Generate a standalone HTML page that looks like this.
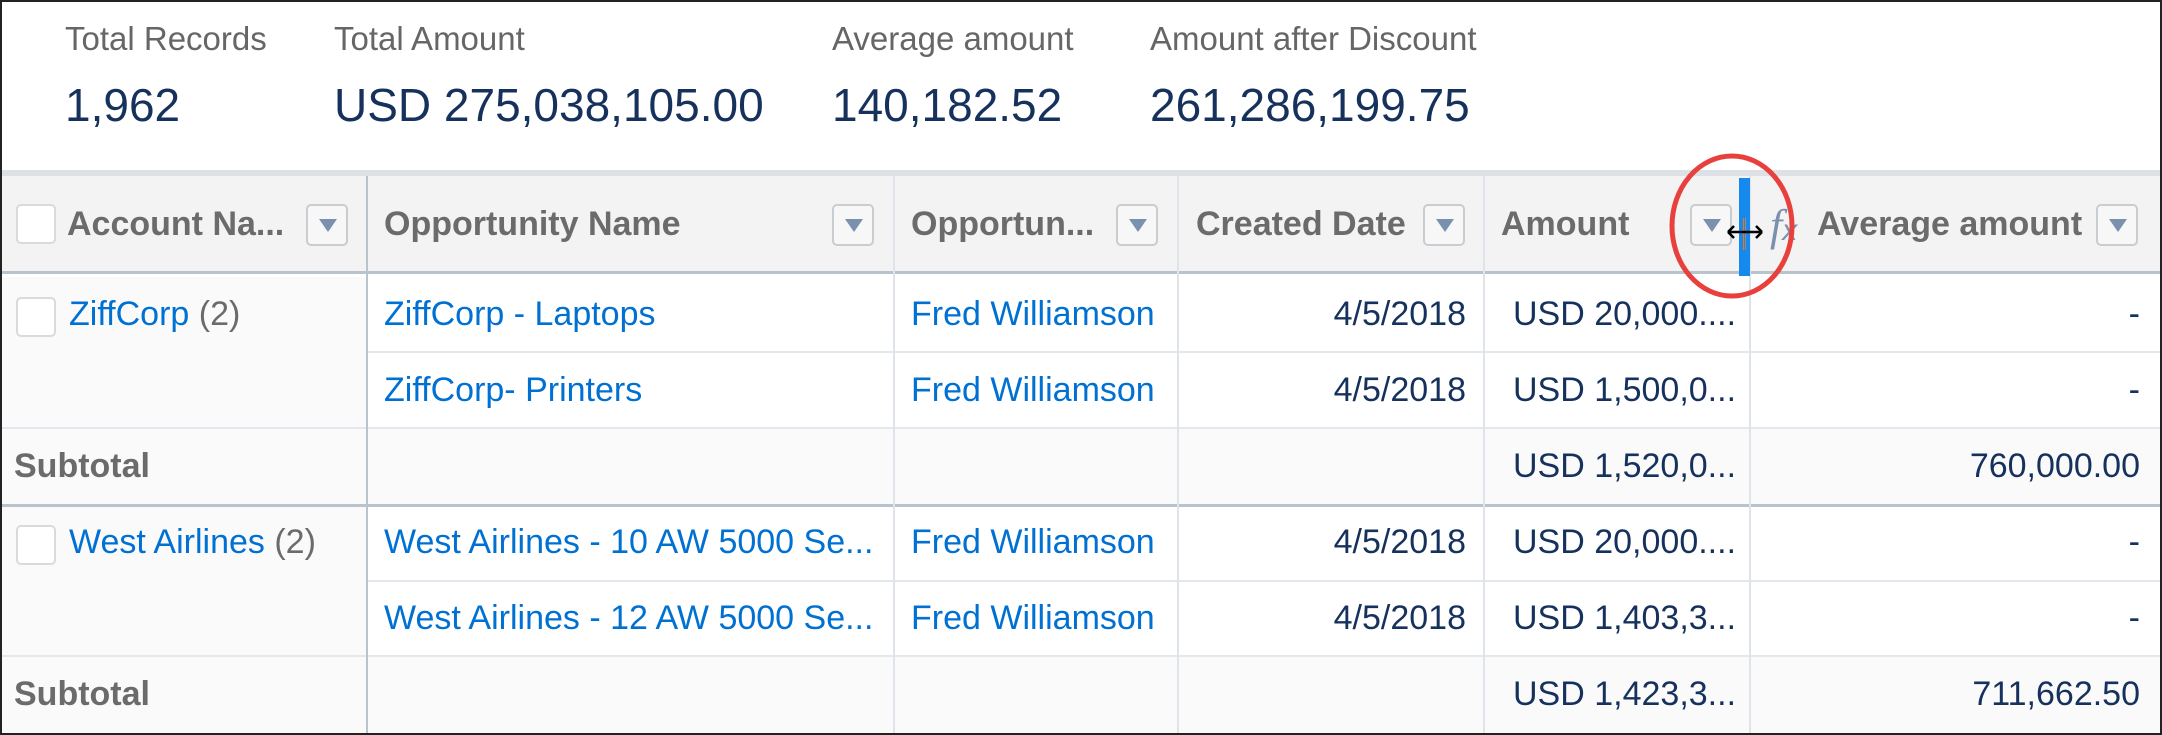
<!DOCTYPE html>
<html><head><meta charset="utf-8"><style>
*{margin:0;padding:0;box-sizing:border-box}
body{width:2162px;height:735px;overflow:hidden;background:#fff;font-family:"Liberation Sans",sans-serif;position:relative}
.frame{position:absolute;left:0;top:0;width:2162px;height:735px;border:2px solid #222}
.lbl{position:absolute;top:20px;font-size:33px;color:#666;white-space:nowrap}
.val{position:absolute;top:78px;font-size:46px;color:#16325c;white-space:nowrap}
.shadow{position:absolute;left:2px;right:2px;top:170px;height:6px;background:#dde1e6}
.hdr{position:absolute;left:2px;right:2px;top:176px;height:98px;background:#f3f3f4;border-bottom:3px solid #b8c3ce}
.vl{position:absolute;width:2px;background:#dfe3ea}
.hl{position:absolute;height:2px;background:#e3e7ee}
.h{position:absolute;top:205px;font-size:34px;font-weight:bold;color:#6b6b6b;white-space:nowrap}
.dd{position:absolute;top:204px;width:42px;height:42px;border:2px solid #c9ccd1;border-radius:5px;background:#f7f7f8}
.dd:after{content:"";position:absolute;left:11px;top:13px;border-left:9px solid transparent;border-right:9px solid transparent;border-top:13px solid #7b90ad}
.cb{position:absolute;width:40px;height:40px;border:2px solid #d8dadd;border-radius:5px;background:#fff}
.t{position:absolute;font-size:34px;white-space:nowrap}
.a{color:#0070d2}
.n{color:#16325c}
.g{color:#6b6b6b}
.b{font-weight:bold;color:#6b6b6b}
.r{text-align:right}
</style></head><body>
<div class="lbl" style="left:65px">Total Records</div>
<div class="lbl" style="left:334px">Total Amount</div>
<div class="lbl" style="left:832px">Average amount</div>
<div class="lbl" style="left:1150px">Amount after Discount</div>
<div class="val" style="left:65px">1,962</div>
<div class="val" style="left:334px">USD 275,038,105.00</div>
<div class="val" style="left:832px">140,182.52</div>
<div class="val" style="left:1150px">261,286,199.75</div>
<div class="shadow"></div>
<div class="hdr"></div>
<div style="position:absolute;left:2px;top:277px;width:365px;height:456px;background:#fafafb"></div>
<div style="position:absolute;left:367px;top:428px;width:1793px;height:77px;background:#fafafb"></div>
<div style="position:absolute;left:367px;top:656px;width:1793px;height:77px;background:#fafafb"></div>
<div class="hl" style="left:367px;right:2px;top:351px"></div>
<div class="hl" style="left:2px;right:2px;top:427px"></div>
<div style="position:absolute;left:2px;right:2px;top:504px;height:3px;background:#b8c3ce"></div>
<div class="hl" style="left:367px;right:2px;top:580px"></div>
<div class="hl" style="left:2px;right:2px;top:655px"></div>
<div class="vl" style="left:366px;top:176px;height:557px;background:#b8c3ce"></div>
<div class="vl" style="left:893px;top:176px;height:557px"></div>
<div class="vl" style="left:1177px;top:176px;height:557px"></div>
<div class="vl" style="left:1483px;top:176px;height:557px"></div>
<div class="vl" style="left:1749px;top:176px;height:557px"></div>
<div class="cb" style="left:16px;top:204px"></div>
<div class="h" style="left:67px">Account Na...</div>
<div class="dd" style="left:306px"></div>
<div class="h" style="left:384px">Opportunity Name</div>
<div class="dd" style="left:832px"></div>
<div class="h" style="left:911px">Opportun...</div>
<div class="dd" style="left:1116px"></div>
<div class="h" style="left:1196px">Created Date</div>
<div class="dd" style="left:1423px"></div>
<div class="h" style="left:1501px">Amount</div>
<div class="dd" style="left:1690px"></div>
<div class="h" style="left:1817px">Average amount</div>
<div class="dd" style="left:2096px"></div>

<div class="cb" style="left:16px;top:297px"></div>
<div class="t" style="left:69px;top:295px"><span class="a">ZiffCorp</span> <span class="g">(2)</span></div>
<div class="t a" style="left:384px;top:295px">ZiffCorp - Laptops</div>
<div class="t a" style="left:911px;top:295px">Fred Williamson</div>
<div class="t n r" style="left:1180px;width:286px;top:295px">4/5/2018</div>
<div class="t n" style="left:1513px;top:295px">USD 20,000....</div>
<div class="t n r" style="left:1752px;width:388px;top:295px">-</div>

<div class="t a" style="left:384px;top:371px">ZiffCorp- Printers</div>
<div class="t a" style="left:911px;top:371px">Fred Williamson</div>
<div class="t n r" style="left:1180px;width:286px;top:371px">4/5/2018</div>
<div class="t n" style="left:1513px;top:371px">USD 1,500,0...</div>
<div class="t n r" style="left:1752px;width:388px;top:371px">-</div>

<div class="t b" style="left:14px;top:447px">Subtotal</div>
<div class="t n" style="left:1513px;top:447px">USD 1,520,0...</div>
<div class="t n r" style="left:1752px;width:388px;top:447px">760,000.00</div>

<div class="cb" style="left:16px;top:525px"></div>
<div class="t" style="left:69px;top:523px"><span class="a">West Airlines</span> <span class="g">(2)</span></div>
<div class="t a" style="left:384px;top:523px">West Airlines - 10 AW 5000 Se...</div>
<div class="t a" style="left:911px;top:523px">Fred Williamson</div>
<div class="t n r" style="left:1180px;width:286px;top:523px">4/5/2018</div>
<div class="t n" style="left:1513px;top:523px">USD 20,000....</div>
<div class="t n r" style="left:1752px;width:388px;top:523px">-</div>

<div class="t a" style="left:384px;top:599px">West Airlines - 12 AW 5000 Se...</div>
<div class="t a" style="left:911px;top:599px">Fred Williamson</div>
<div class="t n r" style="left:1180px;width:286px;top:599px">4/5/2018</div>
<div class="t n" style="left:1513px;top:599px">USD 1,403,3...</div>
<div class="t n r" style="left:1752px;width:388px;top:599px">-</div>

<div class="t b" style="left:14px;top:675px">Subtotal</div>
<div class="t n" style="left:1513px;top:675px">USD 1,423,3...</div>
<div class="t n r" style="left:1752px;width:388px;top:675px">711,662.50</div>

<div style="position:absolute;left:1739px;top:178px;width:11px;height:98px;background:#1589ee"></div>
<div style="position:absolute;left:1743px;top:218px;width:1px;height:32px;background:#e07a2a"></div>
<div style="position:absolute;left:1745px;top:218px;width:1px;height:32px;background:#e07a2a"></div>
<svg style="position:absolute;left:1726px;top:222px" width="38" height="20"><path d="M2 10H36M2 10l6-6M2 10l6 6M36 10l-6-6M36 10l-6 6" stroke="#000" stroke-width="2.5" fill="none"/></svg>
<div style="position:absolute;left:1770px;top:200px;font-family:'Liberation Serif',serif;font-style:italic;font-size:44px;color:#7b90ad">f<span style="font-size:30px;font-family:'Liberation Sans',sans-serif">x</span></div>
<svg style="position:absolute;left:1662px;top:150px" width="140" height="155"><ellipse cx="70" cy="76" rx="60" ry="70" stroke="#e8413d" stroke-width="5" fill="none"/></svg>
<div class="frame"></div>
</body></html>
